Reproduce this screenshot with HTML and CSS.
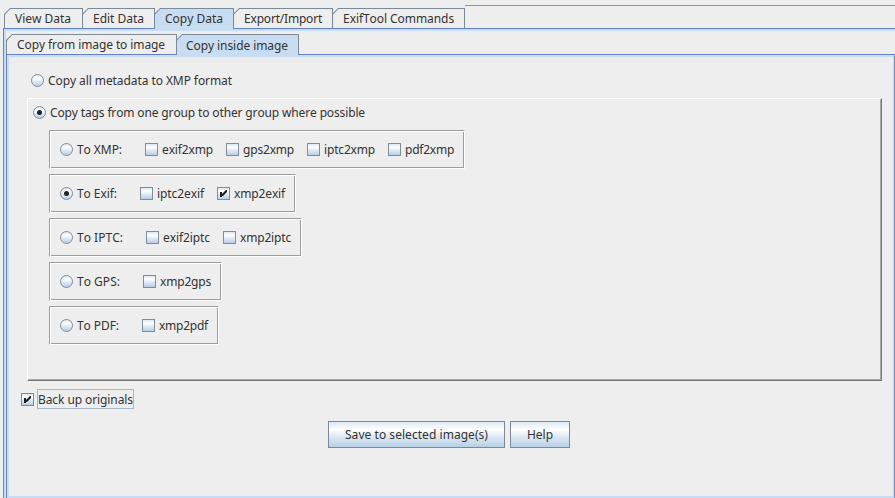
FILE: index.html
```
<!DOCTYPE html>
<html>
<head>
<meta charset="utf-8">
<link rel="stylesheet" href="styles.css">
</head>
<body>
<div class="tabbar outer-bar">
  <div class="tab"><div class="tab-in t">View Data</div></div>
  <div class="tab"><div class="tab-in t">Edit Data</div></div>
  <div class="tab sel"><div class="tab-in t">Copy Data</div></div>
  <div class="tab"><div class="tab-in t">Export/Import</div></div>
  <div class="tab"><div class="tab-in t">ExifTool Commands</div></div>
  <div class="bar-fill"></div>
</div>
<div class="pane outer-pane">
  <div class="tabbar inner-bar">
    <div class="tab"><div class="tab-in t">Copy from image to image</div></div>
    <div class="tab sel"><div class="tab-in t">Copy inside image</div></div>
  </div>
  <div class="pane inner-pane">
    <div class="opt row1"><span class="radio"></span><span class="t">Copy all metadata to XMP format</span></div>
    <div class="group">
      <div class="opt row2"><span class="radio on"><i class="dot"></i></span><span class="t">Copy tags from one group to other group where possible</span></div>
      <div class="boxes">
        <div class="box">
          <div class="opt lead"><span class="radio"></span><span class="t">To XMP:</span></div>
          <div class="opt"><span class="check"></span><span class="t">exif2xmp</span></div>
          <div class="opt"><span class="check"></span><span class="t">gps2xmp</span></div>
          <div class="opt"><span class="check"></span><span class="t">iptc2xmp</span></div>
          <div class="opt"><span class="check"></span><span class="t">pdf2xmp</span></div>
        </div>
        <div class="box">
          <div class="opt lead"><span class="radio on"><i class="dot"></i></span><span class="t">To Exif:</span></div>
          <div class="opt"><span class="check"></span><span class="t">iptc2exif</span></div>
          <div class="opt"><span class="check"><svg class="mark" viewBox="0 0 11 11" width="11" height="11"><rect x="2" y="4" width="2" height="5"/><polygon points="4,6 8,2 9,2 9,4 5,8 4,8"/></svg></span><span class="t">xmp2exif</span></div>
        </div>
        <div class="box">
          <div class="opt lead"><span class="radio"></span><span class="t">To IPTC:</span></div>
          <div class="opt"><span class="check"></span><span class="t">exif2iptc</span></div>
          <div class="opt"><span class="check"></span><span class="t">xmp2iptc</span></div>
        </div>
        <div class="box">
          <div class="opt lead"><span class="radio"></span><span class="t">To GPS:</span></div>
          <div class="opt"><span class="check"></span><span class="t">xmp2gps</span></div>
        </div>
        <div class="box">
          <div class="opt lead"><span class="radio"></span><span class="t">To PDF:</span></div>
          <div class="opt"><span class="check"></span><span class="t">xmp2pdf</span></div>
        </div>
      </div>
    </div>
    <div class="opt backup"><span class="check"><svg class="mark" viewBox="0 0 11 11" width="11" height="11"><rect x="2" y="4" width="2" height="5"/><polygon points="4,6 8,2 9,2 9,4 5,8 4,8"/></svg></span><span class="focus t">Back up originals</span></div>
    <div class="buttons">
      <div class="btn t">Save to selected image(s)</div>
      <div class="btn t">Help</div>
    </div>
  </div>
</div>
<script src="script.js"></script>
</body>
</html>
```
FILE: styles.css
```
* { box-sizing: border-box; }
html, body { margin: 0; padding: 0; }
body {
  width: 895px;
  height: 498px;
  overflow: hidden;
  background: #eeeeee;
  font-family: "Noto Sans", sans-serif;
  font-size: 12px;
  color: #333333;
  font-kerning: none;
  font-variant-ligatures: none;
}

/* tab bars */
.tabbar { display: flex; align-items: flex-end; }
.outer-bar { height: 28px; padding-left: 4px; }
.inner-bar { height: 20px; }
.bar-fill {
  flex: 1;
  align-self: flex-start;
  margin-top: 5px;
  border-top: 1px solid #8c96a3;
}
.tab {
  height: 20px;
  padding: 1px 1px 0 1px;
  background: #7a8a99;
  clip-path: polygon(6px 0, 100% 0, 100% 100%, 0 100%, 0 6px);
  margin-left: -1px;
}
.tab:first-child { margin-left: 0; }
.tab-in {
  height: 100%;
  background: #eeeeee;
  clip-path: polygon(5.4px 0, 100% 0, 100% 100%, 0 100%, 0 5.4px);
  display: flex;
  align-items: center;
  padding: 0 10px;
  white-space: nowrap;
}
.tab:first-child .tab-in { padding: 0 11px 0 10px; }
.inner-bar .tab + .tab .tab-in { padding: 0 10px 0 9px; }
.tab.sel {
  height: 21px;
  margin-bottom: -1px;
  position: relative;
  z-index: 1;
}
.tab.sel .tab-in { background: #c8ddf2; padding-bottom: 1px; }

/* panes */
.outer-pane {
  margin-left: 3px;
  height: 470px;
  border-top: 1px solid #6382bf;
  border-left: 1px solid #6382bf;
  box-shadow: inset 2px 2px 0 #c8ddf2;
  padding: 5px 0 0 2px;
}
.inner-pane {
  height: 444px;
  border-top: 1px solid #6382bf;
  border-left: 1px solid #6382bf;
  border-right: 1px solid #7d8fb3;
  box-shadow: inset 2px 2px 0 #c8ddf2, inset -1px 0 0 #c8ddf2, inset 0 -2px 0 #c8ddf2;
  padding: 2px 1px 0 2px;
  display: flex;
  flex-direction: column;
  align-items: flex-start;
}

/* options */
.opt {
  display: flex;
  align-items: center;
  gap: 4px;
  height: 21px;
  white-space: nowrap;
}
.radio {
  width: 13px;
  height: 13px;
  border-radius: 50%;
  border: 1px solid #7f8c9a;
  background: linear-gradient(180deg, #dde8f3 0%, #ffffff 30%, #dde8f3 60%, #b8cfe5 100%);
  display: flex;
  align-items: center;
  justify-content: center;
  flex: none;
}
.dot {
  width: 5px;
  height: 5px;
  border-radius: 50%;
  background: #222222;
}
.check {
  width: 13px;
  height: 13px;
  border: 1px solid #7f8c9a;
  background: linear-gradient(180deg, #dde8f3 0%, #ffffff 30%, #dde8f3 60%, #b8cfe5 100%);
  display: flex;
  flex: none;
}
.mark { fill: #1e1e1e; display: block; }

.row1 { margin: 13px 0 0 22px; }

.group {
  margin: 7px 11px 0 18px;
  align-self: stretch;
  height: 283px;
  border: 1px solid;
  border-color: #ffffff #7a7a7a #7a7a7a #ffffff;
  box-shadow: inset -1px -1px 0 #a8a8a8;
  padding-top: 3px;
}
.row2 { margin-left: 5px; }
.boxes {
  margin: 7px 0 0 21px;
  display: flex;
  flex-direction: column;
  align-items: flex-start;
  gap: 5px;
}
.box {
  height: 39px;
  display: flex;
  align-items: center;
  gap: 13px;
  padding: 0 10px 0 10px;
  border-style: solid;
  border-width: 1px;
  border-color: #9e9e9e #ffffff #ffffff #9e9e9e;
  box-shadow: inset 1px 1px 0 #ffffff, inset -1px -1px 0 #9e9e9e;
}
.box .lead { margin-right: 10px; }

.backup { margin: 8px 0 0 12px; height: 20px; gap: 3px; }
.focus {
  border: 1px solid #a3b8cc;
  height: 20px;
  display: flex;
  align-items: center;
}

.buttons {
  align-self: stretch;
  display: flex;
  justify-content: center;
  gap: 5px;
  margin-top: 12px;
  padding-right: 4px;
}
.btn {
  height: 27px;
  border: 1px solid #7a8a99;
  background: linear-gradient(180deg, #dde8f3 0%, #ffffff 30%, #dde8f3 60%, #b8cfe5 100%);
  display: flex;
  align-items: center;
  padding: 0 16px;
  white-space: nowrap;
}
```
FILE: script.js
```
(function () {
  var ctx = document.createElement('canvas').getContext('2d');
  ctx.font = '12px "Noto Sans"';
  var cache = {};
  function adv(ch) {
    if (!(ch in cache)) cache[ch] = ctx.measureText(ch).width;
    return cache[ch];
  }
  var els = document.querySelectorAll('.t');
  for (var k = 0; k < els.length; k++) {
    var el = els[k];
    var s = el.textContent;
    var rounded = 0, exact = 0;
    for (var i = 0; i < s.length; i++) {
      var w = adv(s[i]);
      rounded += Math.round(w);
      exact += w;
    }
    if (s.length) el.style.letterSpacing = ((rounded - exact) / s.length).toFixed(3) + 'px';
  }
})();
```
